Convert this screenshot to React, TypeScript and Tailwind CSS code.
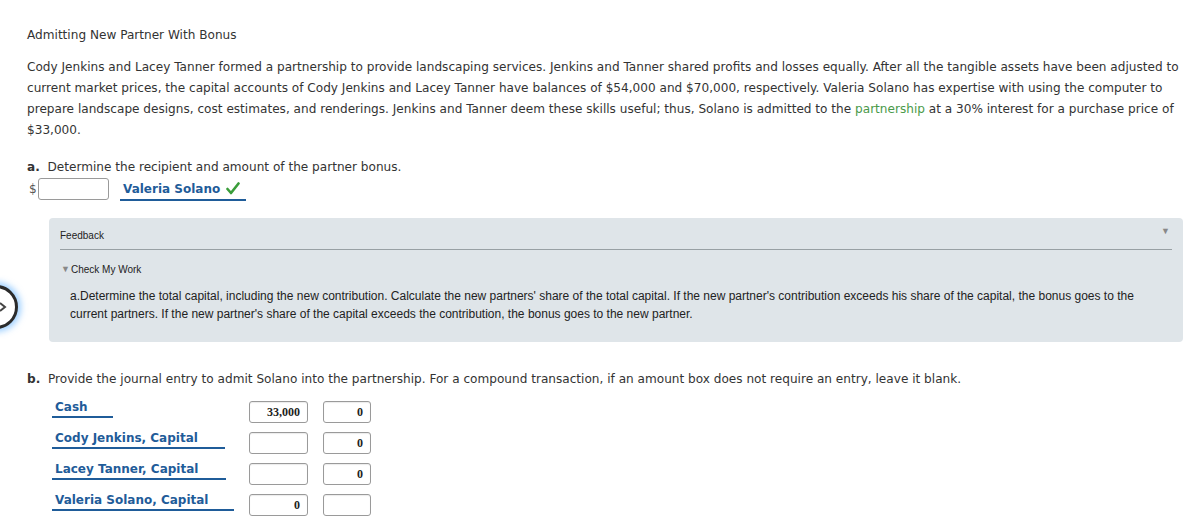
import React from "react";

const verdana = { fontFamily: '"DejaVu Sans", Verdana, sans-serif' };
const arial = { fontFamily: '"Liberation Sans", Arial, sans-serif' };
const times = { fontFamily: '"Liberation Serif", "Times New Roman", serif' };

function Box({ value, w }: { value?: string; w: string }) {
  return (
    <div
      className={`h-[22px] ${w} rounded-[3px] border border-[#9a9a9a] bg-white flex items-center justify-end pr-[7px] text-[12px] font-bold text-[#222] shadow-[inset_0_1px_1px_rgba(0,0,0,0.08)]`}
      style={times}
    >
      {value}
    </div>
  );
}

function Check() {
  return (
    <svg width="14" height="13" viewBox="0 0 14 13">
      <path d="M1.5 7 L5 11 L12.5 1.5" fill="none" stroke="#3a9d3a" strokeWidth="2.6" strokeLinecap="round" strokeLinejoin="round" />
    </svg>
  );
}

export default function App() {
  const rows = [
    { label: "Cash", lw: "w-[61px]", a: "33,000", b: "0" },
    { label: "Cody Jenkins, Capital", lw: "w-[173px]", a: "", b: "0" },
    { label: "Lacey Tanner, Capital", lw: "w-[174px]", a: "", b: "0" },
    { label: "Valeria Solano, Capital", lw: "w-[182px]", a: "0", b: "" },
  ];
  return (
    <div className="relative w-[1189px] h-[529px] overflow-hidden bg-white text-[#333]" style={verdana}>
      <div className="pl-[27px] pr-[6px] pt-[25px]">
        <div className="text-[12.1px] leading-[21px] text-[#333]">Admitting New Partner With Bonus</div>
        <div className="mt-[11px] text-[12.1px] leading-[21px] text-[#333] whitespace-nowrap">
          <div>Cody Jenkins and Lacey Tanner formed a partnership to provide landscaping services. Jenkins and Tanner shared profits and losses equally. After all the tangible assets have been adjusted to</div>
          <div>current market prices, the capital accounts of Cody Jenkins and Lacey Tanner have balances of $54,000 and $70,000, respectively. Valeria Solano has expertise with using the computer to</div>
          <div>
            prepare landscape designs, cost estimates, and renderings. Jenkins and Tanner deem these skills useful; thus, Solano is admitted to the{" "}
            <span className="text-[#4a9a4a]">partnership</span> at a 30% interest for a purchase price of
          </div>
          <div>$33,000.</div>
        </div>

        <div className="mt-[16px] text-[12.1px] leading-[21px] whitespace-nowrap">
          <span className="font-bold">a.</span>&nbsp; Determine the recipient and amount of the partner bonus.
        </div>
        <div className="flex items-start h-[26px]">
          <span className="text-[12.1px] leading-[22px] pl-[2px] w-[11px] text-[#555]">$</span>
          <div className="w-[71px] h-[22px] rounded-[3px] border border-[#9a9a9a] bg-white" />
          <div className="ml-[11px] w-[126px] h-[23px] border-b-[2px] border-[#1f5c99] flex items-center pl-[3px] gap-[6px] whitespace-nowrap">
            <span className="text-[12px] font-bold text-[#1f5c99]">Valeria Solano</span>
            <Check />
          </div>
        </div>

        <div className="ml-[22px] mt-[14px] h-[124px] rounded-[4px] bg-[#dfe5e9] pl-[11px] pr-[11px]" style={arial}>
          <div className="flex items-center justify-between pt-[9px] h-[32px] border-b border-[#98a0a4] pb-[6px]">
            <span className="text-[10px] text-[#222]">Feedback</span>
            <span className="text-[9px] text-[#888] mt-[-6px] mr-[2px]">▼</span>
          </div>
          <div className="mt-[12px] flex items-center text-[10px] text-[#222]">
            <span className="text-[9px] text-[#888] mr-[1px] ml-[1px]">▼</span>
            <span>Check My Work</span>
          </div>
          <div className="ml-[10px] mt-[10px] text-[12px] leading-[18px] text-[#222] whitespace-nowrap">
            a.Determine the total capital, including the new contribution. Calculate the new partners' share of the total capital. If the new partner's contribution exceeds his share of the capital, the bonus goes to the
            <br />
            current partners. If the new partner's share of the capital exceeds the contribution, the bonus goes to the new partner.
          </div>
        </div>

        <div className="mt-[27px] text-[12.1px] leading-[21px] whitespace-nowrap">
          <span className="font-bold">b.</span>&nbsp; Provide the journal entry to admit Solano into the partnership. For a compound transaction, if an amount box does not require an entry, leave it blank.
        </div>

        <div className="mt-[5px] pl-[25px] flex flex-col">
          {rows.map((r) => (
            <div key={r.label} className="flex items-start h-[31px]">
              <div className={`${r.lw} h-[23px] border-b-[2px] border-[#1f5c99] pl-[3px] pt-[4px] text-[12px] font-bold text-[#1f5c99] leading-[16px] whitespace-nowrap`}>
                {r.label}
              </div>
            </div>
          ))}
        </div>
      </div>

      {/* amount boxes */}
      <div className="absolute left-[249px] top-[401px] flex flex-col gap-[9px]">
        {rows.map((r) => (
          <div key={r.label} className="flex gap-[15px]">
            <Box w="w-[59px]" value={r.a} />
            <Box w="w-[48px]" value={r.b} />
          </div>
        ))}
      </div>

      {/* circle nav button */}
      <div className="absolute left-[-26px] top-[285px] w-[44px] h-[44px] rounded-full border-[3px] border-[#2b2b2b] bg-white shadow-[0_0_6px_3px_rgba(80,170,255,0.55)] flex items-center justify-end pr-[8px]">
        <svg width="8" height="10" viewBox="0 0 8 10">
          <path d="M1 1 L6 5 L1 9" fill="none" stroke="#444" strokeWidth="2" />
        </svg>
      </div>
    </div>
  );
}
